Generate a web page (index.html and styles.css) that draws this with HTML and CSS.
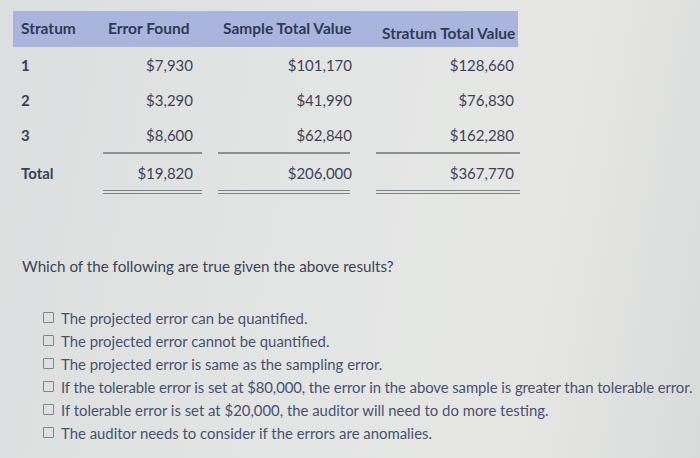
FILE: index.html
```html
<!DOCTYPE html>
<html>
<head>
<meta charset="utf-8">
<link rel="stylesheet" href="styles.css">
</head>
<body>
<div class="page">
  <div class="table">
    <div class="row head">
      <div class="c c1">Stratum</div>
      <div class="c c2">Error Found</div>
      <div class="c c3">Sample Total Value</div>
      <div class="c c4">Stratum Total Value</div>
    </div>
    <div class="row">
      <div class="c c1">1</div>
      <div class="c c2">$7,930</div>
      <div class="c c3">$101,170</div>
      <div class="c c4">$128,660</div>
    </div>
    <div class="row">
      <div class="c c1">2</div>
      <div class="c c2">$3,290</div>
      <div class="c c3">$41,990</div>
      <div class="c c4">$76,830</div>
    </div>
    <div class="row">
      <div class="c c1">3</div>
      <div class="c c2">$8,600</div>
      <div class="c c3">$62,840</div>
      <div class="c c4">$162,280</div>
    </div>
    <div class="rule single">
      <div></div><div class="l l2"></div><div class="l l3"></div><div class="l l4"></div>
    </div>
    <div class="row total">
      <div class="c c1">Total</div>
      <div class="c c2">$19,820</div>
      <div class="c c3">$206,000</div>
      <div class="c c4">$367,770</div>
    </div>
    <div class="rule double">
      <div></div><div class="l l2"></div><div class="l l3"></div><div class="l l4"></div>
    </div>
  </div>

  <p class="question">Which of the following are true given the above results?</p>

  <ul class="options">
    <li><span class="box"></span>The projected error can be quantified.</li>
    <li><span class="box"></span>The projected error cannot be quantified.</li>
    <li><span class="box"></span>The projected error is same as the sampling error.</li>
    <li class="tight"><span class="box"></span>If the tolerable error is set at $80,000, the error in the above sample is greater than tolerable error.</li>
    <li><span class="box"></span>If tolerable error is set at $20,000, the auditor will need to do more testing.</li>
    <li><span class="box"></span>The auditor needs to consider if the errors are anomalies.</li>
  </ul>
</div>
</body>
</html>
```

FILE: styles.css
```css
html, body {
  margin: 0;
  padding: 0;
}
body {
  width: 700px;
  height: 458px;
  overflow: hidden;
  background: linear-gradient(100deg, #dcdfdf 0%, #e3e5e4 45%, #e6e7e5 75%, #d9dbda 100%);
  font-family: Lato, "Noto Sans", sans-serif;
  color: #3d4457;
}
.page {
  padding: 11px 0 0 13px;
}
.table {
  width: 505px;
}
.row, .rule {
  display: grid;
  grid-template-columns: 85px 105px 159px 156px;
}
.row {
  height: 35px;
  align-items: center;
  font-size: 15px;
}
.row.head {
  height: 36px;
  background: #a9b5dc;
  font-size: 15.5px;
  font-weight: 700;
  color: #2f3a58;
  padding-bottom: 3px;
  box-sizing: border-box;
}
.c1 {
  padding-left: 8px;
  font-weight: 700;
  color: #3a4256;
}
.head .c1 { color: #2f3a58; }
.c2 { text-align: right; padding-right: 10px; }
.c3 { text-align: right; padding-right: 10px; }
.c4 { text-align: right; padding-right: 4px; }
.head .c2 { text-align: left; padding-left: 10px; padding-right: 0; white-space: nowrap; }
.head .c3 { text-align: left; padding-left: 20px; padding-right: 0; white-space: nowrap; }
.head .c4 { text-align: left; padding-left: 20px; padding-right: 0; white-space: nowrap; }
.head .c4 { position: relative; top: 5px; }

.row.total { height: 34px; }

.rule {
  height: 4px;
}
.l2 { margin: 0 1px 0 5px; }
.l3 { margin: 0 12px 0 15px; }
.l4 { margin: 0 -2px 0 14px; }
.single .l {
  border-top: 2px solid #8b9095;
}
.double .l {
  border-top: 4px double #80858a;
}

.question {
  margin: 63px 0 0 9px;
  font-size: 15.2px;
  color: #3b4356;
}
.options {
  list-style: none;
  margin: 31px 0 0 30px;
  padding: 0;
  font-size: 14.9px;
  color: #485170;
}
.options li {
  display: flex;
  align-items: center;
  height: 23px;
  white-space: nowrap;
}
.options li.tight {
  letter-spacing: -0.08px;
}
.box {
  width: 9px;
  height: 9px;
  border: 1.5px solid #80858c;
  border-radius: 1px;
  margin-right: 7px;
  flex: none;
}
```
